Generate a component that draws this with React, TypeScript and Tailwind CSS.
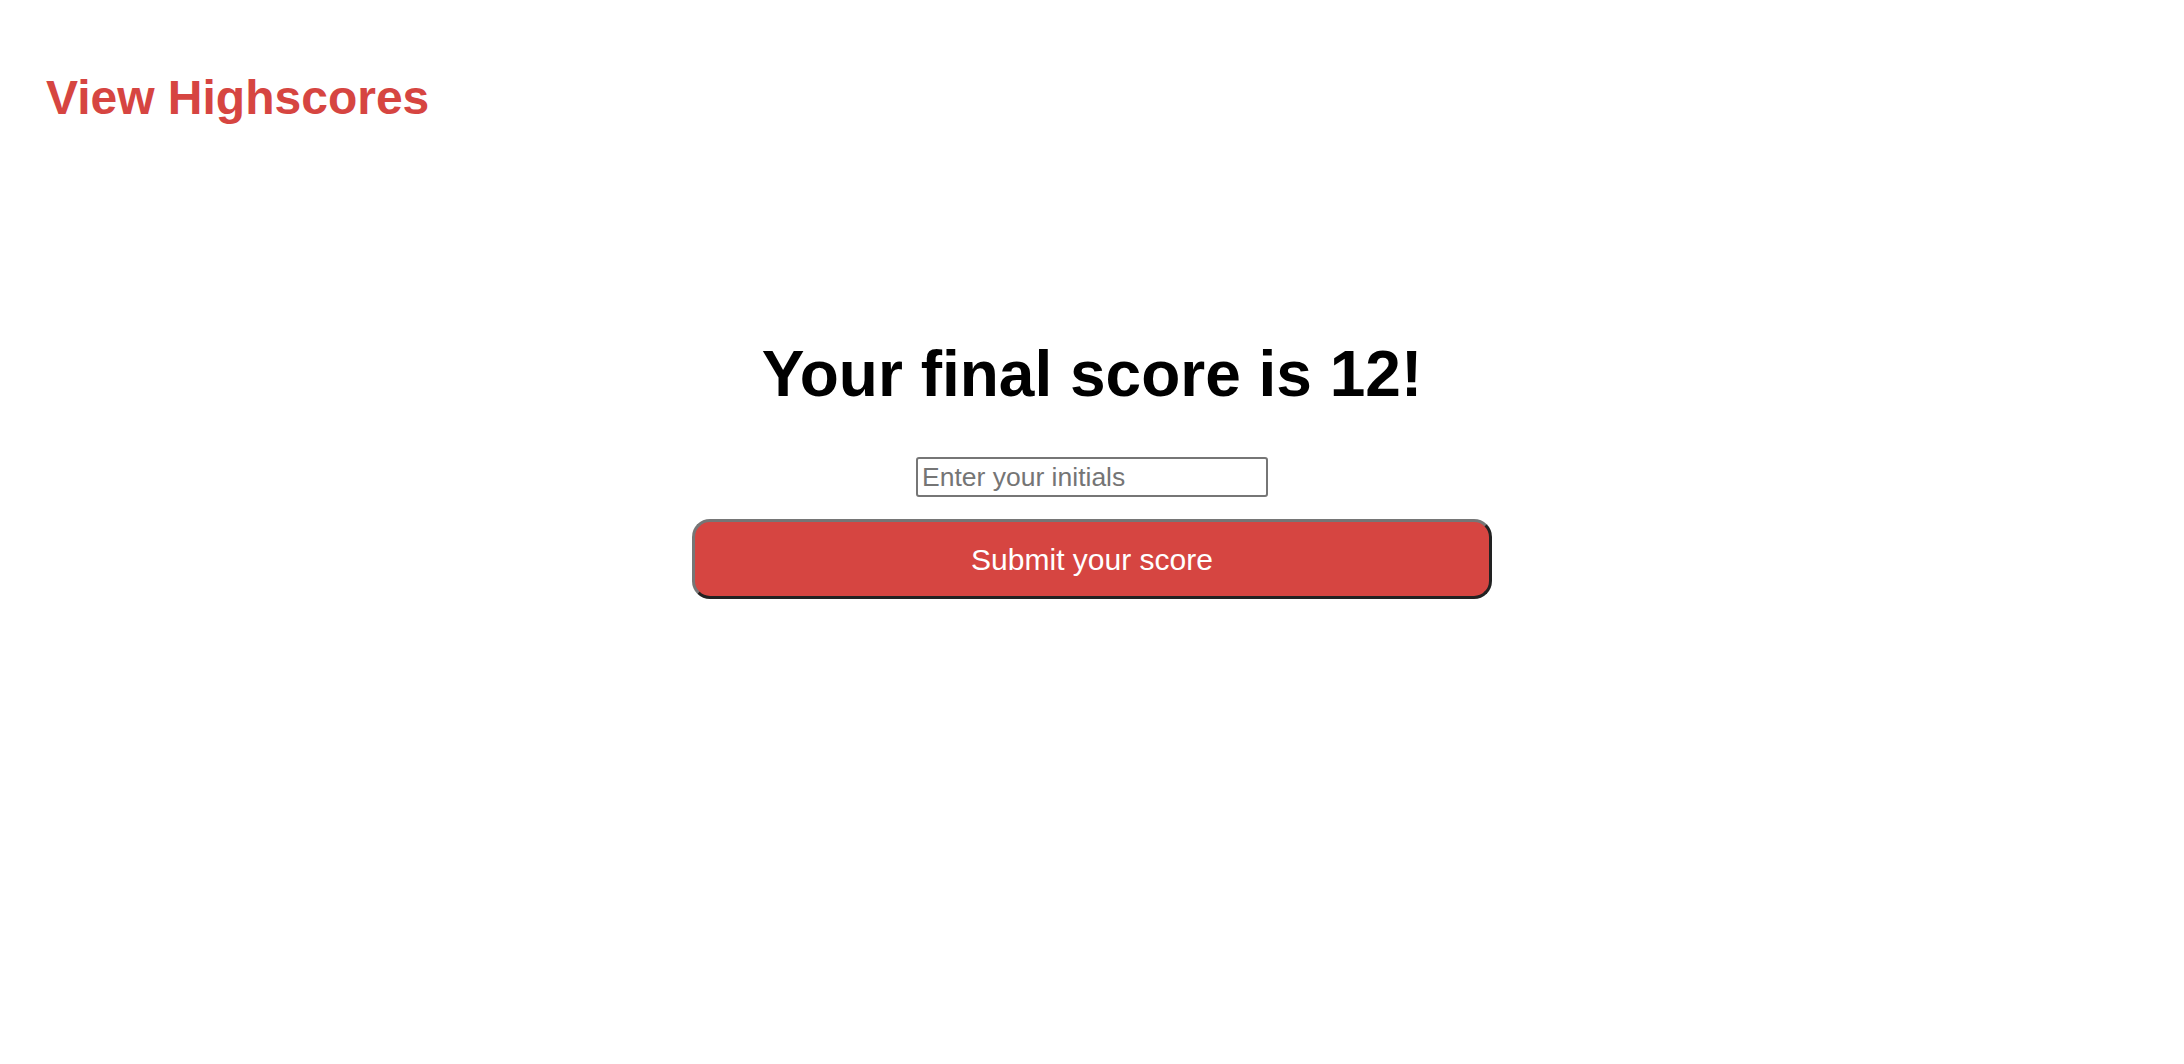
import { useState } from "react";

export default function App() {
  const [initials, setInitials] = useState("");

  return (
    <div className="min-h-screen bg-white font-['Liberation_Sans',Arial,sans-serif] text-black">
      <header className="pl-[46px] pt-[70px]">
        <a
          href="#highscores"
          className="text-[48px] font-bold leading-[56px] text-[#d64541]"
        >
          View Highscores
        </a>
      </header>

      <main className="mt-[212px] flex flex-col items-center">
        <h1 className="text-[64px] font-bold leading-[72px]">
          Your final score is 12!
        </h1>

        <input
          type="text"
          value={initials}
          onChange={(e) => setInitials(e.target.value)}
          placeholder="Enter your initials"
          className="mt-[47px] h-[40px] w-[352px] rounded-[3px] border-2 border-[#767676] bg-white pl-[4px] text-[26.5px] text-black outline-none placeholder:text-[#757575]"
        />

        <button
          type="button"
          className="mt-[22px] h-[80px] w-[800px] rounded-[18px] border-[3px] border-t-[#767676] border-r-[#222222] border-b-[#222222] border-l-[#767676] bg-[#d64541] text-[30px] text-white"
        >
          Submit your score
        </button>
      </main>
    </div>
  );
}
